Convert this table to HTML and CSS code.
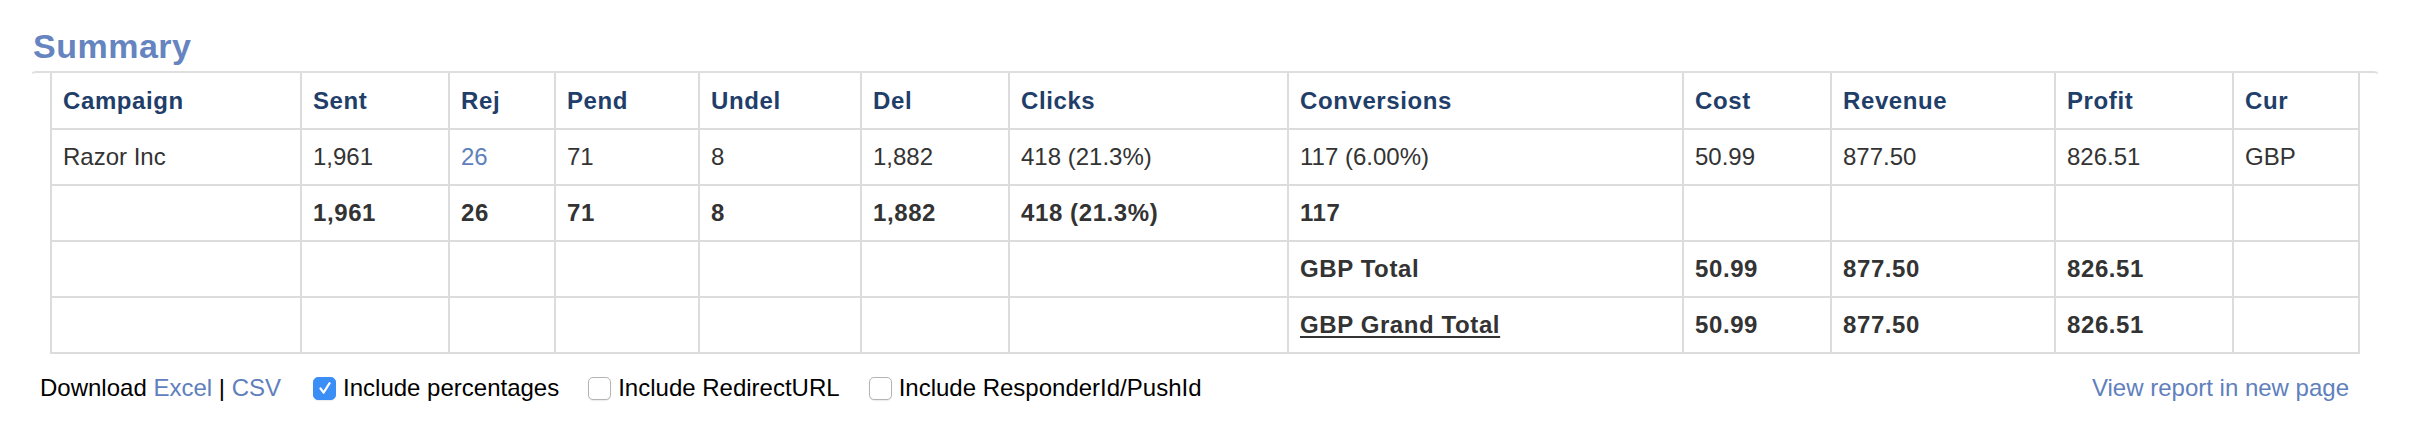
FILE: index.html
```html
<!DOCTYPE html>
<html>
<head>
<meta charset="utf-8">
<link rel="stylesheet" href="styles.css">
</head>
<body>
<div class="page">
  <h2 class="title">Summary</h2>
  <div class="panel">
    <table class="report">
      <colgroup>
        <col class="c-campaign"><col class="c-sent"><col class="c-rej"><col class="c-pend">
        <col class="c-undel"><col class="c-del"><col class="c-clicks"><col class="c-conv">
        <col class="c-cost"><col class="c-rev"><col class="c-profit"><col class="c-cur">
      </colgroup>
      <thead>
        <tr>
          <th>Campaign</th><th>Sent</th><th>Rej</th><th>Pend</th><th>Undel</th><th>Del</th>
          <th>Clicks</th><th>Conversions</th><th>Cost</th><th>Revenue</th><th>Profit</th><th>Cur</th>
        </tr>
      </thead>
      <tbody>
        <tr>
          <td>Razor Inc</td><td>1,961</td><td><a class="link" href="#">26</a></td><td>71</td><td>8</td><td>1,882</td>
          <td>418 (21.3%)</td><td>117 (6.00%)</td><td>50.99</td><td>877.50</td><td>826.51</td><td>GBP</td>
        </tr>
        <tr class="bold">
          <td></td><td>1,961</td><td>26</td><td>71</td><td>8</td><td>1,882</td>
          <td>418 (21.3%)</td><td>117</td><td></td><td></td><td></td><td></td>
        </tr>
        <tr class="bold">
          <td></td><td></td><td></td><td></td><td></td><td></td>
          <td></td><td>GBP Total</td><td>50.99</td><td>877.50</td><td>826.51</td><td></td>
        </tr>
        <tr class="bold">
          <td></td><td></td><td></td><td></td><td></td><td></td>
          <td></td><td><a class="grand" href="#">GBP Grand Total</a></td><td>50.99</td><td>877.50</td><td>826.51</td><td></td>
        </tr>
      </tbody>
    </table>
    <div class="footer">
      <div class="download">Download <a class="link" href="#">Excel</a> | <a class="link" href="#">CSV</a></div>
      <label class="opt"><span class="box checked"><svg viewBox="0 0 22 22" width="22" height="22"><path d="M6.5 11.5 L9.6 15.6 L15.6 6.2" fill="none" stroke="#fff" stroke-width="2.2" stroke-linecap="round" stroke-linejoin="round"/></svg></span>Include percentages</label>
      <label class="opt"><span class="box"></span>Include RedirectURL</label>
      <label class="opt"><span class="box"></span>Include ResponderId/PushId</label>
      <a class="link view" href="#">View report in new page</a>
    </div>
  </div>
</div>
</body>
</html>
```
FILE: styles.css
```css
* { box-sizing: border-box; }
html, body { margin: 0; padding: 0; background: #fff; }
body { font-family: "Liberation Sans", Arial, sans-serif; font-size: 24px; color: #333; }

.page { padding-left: 30px; padding-top: 29px; }

.title {
  margin: 0 0 0 3px;
  font-size: 34px;
  line-height: 34px;
  font-weight: bold;
  letter-spacing: 0.5px;
  color: #6684bf;
}

.panel {
  width: 2350px;
  margin-top: 8px;
  border-top: 2px solid #dedede;
  border-left: 2px solid transparent;
  border-right: 2px solid transparent;
  border-radius: 6px 6px 0 0;
  padding: 0 18px;
}

.report {
  border-collapse: collapse;
  table-layout: fixed;
  width: 2310px;
}
.c-campaign { width: 250px; }
.c-sent { width: 148px; }
.c-rej { width: 106px; }
.c-pend { width: 144px; }
.c-undel { width: 162px; }
.c-del { width: 148px; }
.c-clicks { width: 279px; }
.c-conv { width: 395px; }
.c-cost { width: 148px; }
.c-rev { width: 224px; }
.c-profit { width: 178px; }
.c-cur { width: 126px; }

.report th, .report td {
  border: 2px solid #dcdcdc;
  height: 56px;
  padding: 0 11px;
  text-align: left;
  vertical-align: middle;
  white-space: nowrap;
  line-height: 28px;
}
.report thead th { border-top: none; }
.report th {
  color: #1f3e69;
  font-weight: bold;
  letter-spacing: 0.6px;
}
.report tr.bold td {
  font-weight: bold;
  letter-spacing: 0.6px;
}

.link { color: #5f80bd; text-decoration: none; }
.grand { color: #333; text-decoration: underline; text-underline-offset: 3px; }

.footer {
  display: flex;
  align-items: center;
  margin: 19px 11px 0 -10px;
  height: 30px;
  line-height: 30px;
  color: #000;
}
.download { margin-right: 32px; }
.opt {
  display: flex;
  align-items: center;
  margin-right: 29px;
}
.box {
  width: 23px;
  height: 23px;
  border-radius: 5px;
  border: 1.5px solid #b4b4b4;
  background: #fff;
  margin-right: 7px;
  display: flex;
  align-items: center;
  justify-content: center;
  box-shadow: 0 1px 1px rgba(0,0,0,0.08);
}
.box.checked {
  background: #3b8ef5;
  border-color: #3b8ef5;
}
.box svg { display: block; margin: -1.5px; }
.view { margin-left: auto; }
```
